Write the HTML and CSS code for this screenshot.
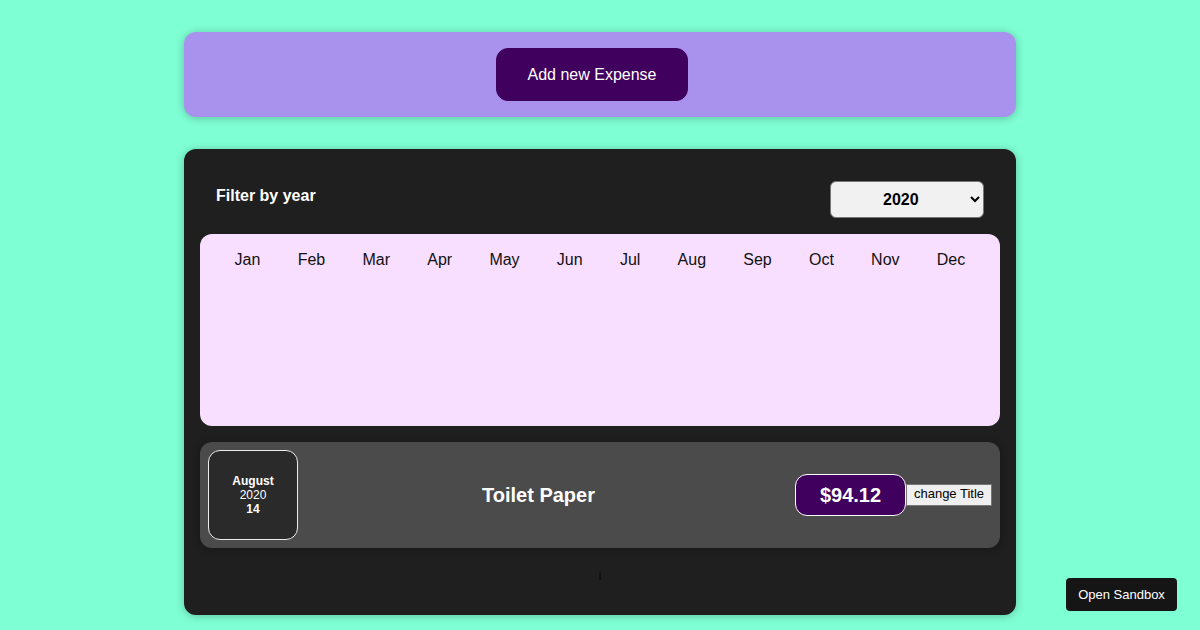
FILE: index.html
```html
<!DOCTYPE html>
<html lang="en">
<head>
<meta charset="utf-8">
<title>Expenses</title>
<link rel="stylesheet" href="styles.css">
</head>
<body>
<div class="new-expense">
  <button class="new-expense__btn">Add new Expense</button>
</div>
<div class="expenses">
  <div class="expenses-filter">
    <label class="filter-label">Filter by year</label>
    <select class="filter-select">
      <option>2020</option>
      <option>2021</option>
      <option>2022</option>
    </select>
  </div>
  <div class="chart">
    <div class="chart-bar">Jan</div>
    <div class="chart-bar">Feb</div>
    <div class="chart-bar">Mar</div>
    <div class="chart-bar">Apr</div>
    <div class="chart-bar">May</div>
    <div class="chart-bar">Jun</div>
    <div class="chart-bar">Jul</div>
    <div class="chart-bar">Aug</div>
    <div class="chart-bar">Sep</div>
    <div class="chart-bar">Oct</div>
    <div class="chart-bar">Nov</div>
    <div class="chart-bar">Dec</div>
  </div>
  <div class="expense-item">
    <div class="expense-date">
      <div class="expense-date__month">August</div>
      <div class="expense-date__year">2020</div>
      <div class="expense-date__day">14</div>
    </div>
    <h2 class="expense-item__title">Toilet Paper</h2>
    <div class="expense-item__price">$94.12</div>
    <button class="change-btn">change Title</button>
  </div>
  <div class="expenses-foot">i</div>
</div>
<a class="sandbox-btn">Open Sandbox</a>
</body>
</html>
```
FILE: styles.css
```css
* { box-sizing: border-box; }
html, body { margin: 0; padding: 0; }
body {
  background: #7fffd4;
  font-family: "Liberation Sans", Arial, sans-serif;
  font-size: 16px;
  padding-top: 32px;
  height: 630px;
  overflow: hidden;
}
.new-expense {
  width: 832px;
  margin: 0 auto 32px;
  background: #a892ee;
  border-radius: 12px;
  padding: 16px;
  text-align: center;
  box-shadow: 0 1px 8px rgba(0,0,0,0.25);
}
.new-expense__btn {
  font: inherit;
  height: 53px;
  width: 192px;
  padding: 0;
  white-space: nowrap;
  border: 1px solid #40005d;
  background: #40005d;
  color: #fff;
  border-radius: 12px;
  margin-right: 16px;
}
.expenses {
  width: 832px;
  margin: 0 auto;
  background: #1f1f1f;
  border-radius: 12px;
  padding: 16px;
  box-shadow: 0 1px 8px rgba(0,0,0,0.25);
}
.expenses-filter {
  display: flex;
  justify-content: space-between;
  align-items: center;
  padding: 0 16px;
  margin: 16px 0;
  color: #fff;
}
.filter-label {
  font-weight: bold;
  margin-bottom: 8px;
}
.filter-select {
  font: inherit;
  font-weight: bold;
  width: 154px;
  height: 37px;
  padding: 0 0 0 48px;
  border-radius: 6px;
  border: 1px solid #767676;
  background-color: #f1f1f1;
  color: #000;
}
.chart {
  height: 192px;
  padding: 17px 16px 16px;
  border-radius: 12px;
  background: #f8dfff;
  display: flex;
  justify-content: space-around;
  color: #111;
  line-height: 18px;
}
.expense-item {
  display: flex;
  align-items: center;
  padding: 8px;
  margin: 16px 0;
  border-radius: 12px;
  background: #4b4b4b;
  box-shadow: 0 1px 8px rgba(0,0,0,0.25);
}
.expense-date {
  width: 90px;
  height: 90px;
  display: flex;
  flex-direction: column;
  align-items: center;
  justify-content: center;
  border: 1px solid #ececec;
  background: #2a2a2a;
  color: #fff;
  border-radius: 12px;
  font-size: 12px;
  line-height: 14px;
}
.expense-date__month, .expense-date__day { font-weight: bold; }
.expense-item__title {
  flex: 1;
  margin: 0 16px 0 0;
  text-align: center;
  color: #fff;
  font-size: 20px;
}
.expense-item__price {
  font-size: 20px;
  font-weight: bold;
  color: #fff;
  background: #40005d;
  border: 1px solid #fff;
  border-radius: 12px;
  width: 111px;
  height: 42px;
  line-height: 40px;
  text-align: center;
}
.change-btn {
  font-family: "Liberation Sans", Arial, sans-serif;
  font-size: 13px;
  height: 22px;
  line-height: 16px;
  padding: 0 6px 2px;
  background: #efefef;
  border: 1px solid #767676;
  border-radius: 0;
  color: #000;
  width: 86px;
}
.expenses-foot {
  text-align: center;
  color: #000;
  font-size: 11px;
  height: 35px;
  line-height: 24px;
  margin-bottom: 0;
}
.sandbox-btn {
  position: fixed;
  right: 23px;
  bottom: 19px;
  width: 111px;
  height: 33px;
  line-height: 33px;
  text-align: center;
  background: #151515;
  color: #fff;
  font-size: 13px;
  border-radius: 4px;
}
```
